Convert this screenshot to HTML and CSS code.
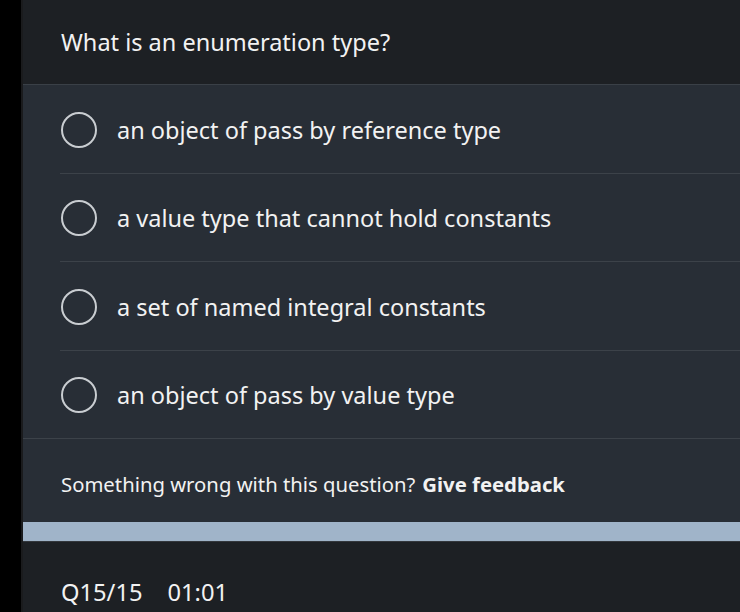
FILE: index.html
```html
<!DOCTYPE html>
<html>
<head>
<meta charset="utf-8">
<link rel="stylesheet" href="styles.css">
</head>
<body>
<div class="app">
  <div class="question">What is an enumeration type?</div>
  <div class="options">
    <div class="option"><span class="radio"></span><span class="label">an object of pass by reference type</span></div>
    <div class="option"><span class="radio"></span><span class="label">a value type that cannot hold constants</span></div>
    <div class="option"><span class="radio"></span><span class="label">a set of named integral constants</span></div>
    <div class="option"><span class="radio"></span><span class="label">an object of pass by value type</span></div>
  </div>
  <div class="feedback">Something wrong with this question? <b>Give feedback</b></div>
  <div class="progress"><div class="progress-fill" style="width:100%"></div></div>
  <div class="footer"><span>Q15/15</span><span>01:01</span></div>
</div>
</body>
</html>
```
FILE: styles.css
```css
html, body {
  margin: 0;
  padding: 0;
  background: #000;
  height: 100%;
  overflow: hidden;
}
body {
  font-family: "Noto Sans", "Open Sans", sans-serif;
  color: #f2f2f2;
}
.app {
  margin-left: 21px;
  border-left: 2px solid #1a1b1d;
  min-height: 100%;
  background: #1d2024;
}
.question {
  height: 85px;
  box-sizing: border-box;
  padding-left: 38px;
  padding-bottom: 1px;
  display: flex;
  align-items: center;
  font-size: 23.5px;
  border-bottom: 1px solid #3a4047;
  background: #1d2024;
}
.options {
  background: #282e36;
}
.option {
  height: 88.5px;
  box-sizing: border-box;
  display: flex;
  align-items: center;
  margin-left: 37px;
  padding-top: 2px;
  border-bottom: 1px solid #3c4249;
}
.option:last-child {
  margin-left: 0;
  padding-left: 37px;
}
.radio {
  width: 32px;
  height: 32px;
  border: 2px solid #c9cdd1;
  border-radius: 50%;
  margin-left: 1px;
  margin-right: 20px;
  flex: none;
}
.label {
  font-size: 23.5px;
}
.feedback {
  background: #282e36;
  height: 83px;
  box-sizing: border-box;
  padding-left: 38px;
  padding-top: 6px;
  display: flex;
  align-items: center;
  font-size: 20.3px;
  gap: 7px;
}
.feedback b {
  font-weight: 700;
}
.progress {
  height: 19px;
  background: #282e36;
  border-bottom: 1px solid #33373c;
}
.progress-fill {
  height: 100%;
  background: #a0b4c9;
}
.footer {
  background: #1d2024;
  padding: 34px 0 0 38px;
  display: flex;
  gap: 25px;
  font-size: 23.7px;
}
```
